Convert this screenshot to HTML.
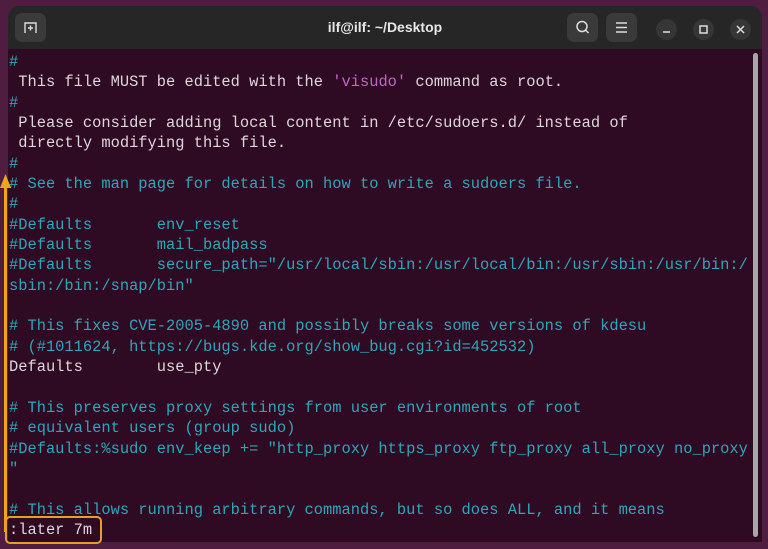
<!DOCTYPE html>
<html><head><meta charset="utf-8"><style>
html,body{margin:0;padding:0;width:768px;height:549px;overflow:hidden;background:#4e1d3f;}
.win{position:absolute;left:8px;top:6px;width:754px;height:536px;border-radius:12px 12px 0 0;background:#2f0a23;overflow:hidden;}
.hdr{position:absolute;left:0;top:0;width:754px;height:43px;background:#262626;}
.title{position:absolute;left:0;width:754px;top:13px;text-align:center;color:#e8e8e8;font:bold 14px "Liberation Sans",sans-serif;}
.btn{position:absolute;top:7px;width:31px;height:29px;border-radius:7px;background:#3a3a3a;}
.cb{position:absolute;top:13px;width:21px;height:21px;border-radius:50%;background:#363636;}
pre{position:absolute;left:1px;top:46px;margin:0;font:15.4px/20.35px "Liberation Mono",monospace;color:#dcd8d8;}
.c{color:#2ea6ba}.m{color:#c166c8}
.sb{position:absolute;left:745px;top:47px;width:5px;height:484px;border-radius:3px;background:#a8a8a8;}
.bar{position:absolute;left:4px;top:186px;width:3px;height:346px;background:#f2a516;}
.box{position:absolute;left:5px;top:516px;width:93px;height:24px;border:2px solid #e3a12a;border-radius:5px;}
</style></head><body>
<div class="win">
<div class="hdr">
<div class="btn" style="left:7px"><svg width="31" height="29"><path d="M10 20V10h11v10M15.5 12.5v5M13 15h5" stroke="#ddd" stroke-width="1.4" fill="none"/></svg></div>
<div class="title">ilf@ilf: ~/Desktop</div>
<div class="btn" style="left:559px"><svg width="31" height="29"><circle cx="15" cy="13.5" r="5" stroke="#ddd" stroke-width="1.5" fill="none"/><path d="M18.5 17l3 3" stroke="#ddd" stroke-width="1.5"/></svg></div>
<div class="btn" style="left:598px"><svg width="31" height="29"><path d="M10 10h11M10 14.5h11M10 19h11" stroke="#ddd" stroke-width="1.5"/></svg></div>
<div class="cb" style="left:648px"><svg width="21" height="21"><path d="M7 13h7" stroke="#ddd" stroke-width="1.5"/></svg></div>
<div class="cb" style="left:685px"><svg width="21" height="21"><rect x="7" y="7" width="7" height="7" stroke="#ddd" stroke-width="1.5" fill="none"/></svg></div>
<div class="cb" style="left:722px"><svg width="21" height="21"><path d="M7 7l7 7M14 7l-7 7" stroke="#ddd" stroke-width="1.5"/></svg></div>
</div>
<pre><span class="c">#</span>
 This file MUST be edited with the <span class="m">'visudo'</span> command as root.
<span class="c">#</span>
 Please consider adding local content in /etc/sudoers.d/ instead of
 directly modifying this file.
<span class="c">#</span>
<span class="c"># See the man page for details on how to write a sudoers file.</span>
<span class="c">#</span>
<span class="c">#Defaults       env_reset</span>
<span class="c">#Defaults       mail_badpass</span>
<span class="c">#Defaults       secure_path="/usr/local/sbin:/usr/local/bin:/usr/sbin:/usr/bin:/</span>
<span class="c">sbin:/bin:/snap/bin"</span>

<span class="c"># This fixes CVE-2005-4890 and possibly breaks some versions of kdesu</span>
<span class="c"># (#1011624, https://bugs.kde.org/show_bug.cgi?id=452532)</span>
Defaults        use_pty

<span class="c"># This preserves proxy settings from user environments of root</span>
<span class="c"># equivalent users (group sudo)</span>
<span class="c">#Defaults:%sudo env_keep += "http_proxy https_proxy ftp_proxy all_proxy no_proxy</span>
<span class="c">"</span>

<span class="c"># This allows running arbitrary commands, but so does ALL, and it means</span>
:later 7m</pre>
<div class="sb"></div>
</div>
<div class="bar"></div>
<svg style="position:absolute;left:0;top:174px" width="12" height="16"><path d="M5.5 0L11 14H0z" fill="#f2a516"/></svg>
<div class="box"></div>
</body></html>
